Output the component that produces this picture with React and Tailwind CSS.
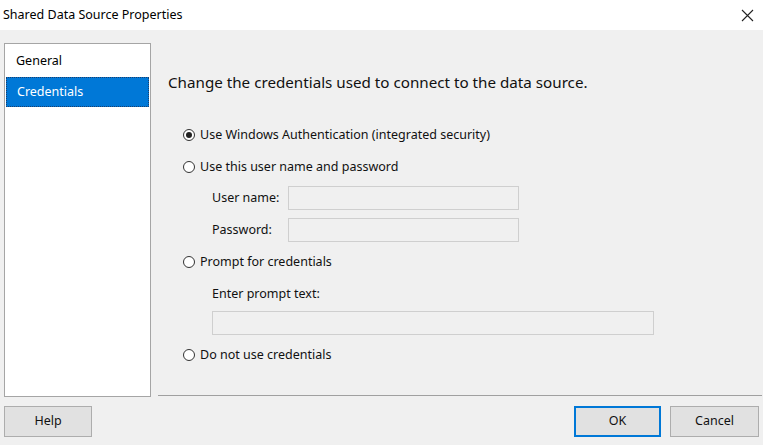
import React from "react";

const font = { fontFamily: '"Noto Sans", "Open Sans", sans-serif' };

function Radio({ checked, label }) {
  return (
    <div className="flex h-[20px] items-center">
      <span className="flex h-[12px] w-[12px] items-center justify-center rounded-full border border-[#333] bg-white">
        {checked && <span className="h-[6px] w-[6px] rounded-full bg-[#222]" />}
      </span>
      <span className="ml-[5px] text-[12.5px] text-[#111]">{label}</span>
    </div>
  );
}

function Field({ className }) {
  return <div className={`h-[24px] border border-[#cfcfcf] bg-[#f0f0f0] ${className}`} />;
}

function Button({ children, primary, className }) {
  return (
    <button
      className={`flex h-[31px] items-center justify-center bg-[#e1e1e1] text-[12.5px] text-[#111] ${
        primary ? "border-2 border-[#0078d7]" : "border border-[#adadad]"
      } ${className}`}
    >
      {children}
    </button>
  );
}

export default function App() {
  return (
    <div className="flex h-[445px] w-[763px] flex-col overflow-hidden bg-[#f0f0f0]" style={font}>
      {/* title bar */}
      <div className="flex h-[30px] items-center justify-between bg-white pl-[3px] pr-[8px]">
        <span className="text-[12.5px] text-black">Shared Data Source Properties</span>
        <svg width="13" height="13" viewBox="0 0 13 13" className="mr-[1px]">
          <path d="M1 1 L12 12 M12 1 L1 12" stroke="#222" strokeWidth="1.1" />
        </svg>
      </div>

      {/* body */}
      <div className="flex pt-[13px] pl-[4px] pr-[1px]">
        <div className="flex h-[354px] w-[147px] flex-col border border-[#a5a5a5] bg-white">
          <div className="flex h-[32px] items-center pl-[11px] pt-[2px] text-[12.5px] text-black">General</div>
          <div className="mx-px mt-px flex h-[30px] items-center border border-dotted border-[#1a3f6e] bg-[#0078d7] pl-[10px] pt-[1px] text-[12.5px] text-white">
            Credentials
          </div>
        </div>

        <div className="ml-[7px] flex h-[353px] flex-1 flex-col border-b border-[#a0a0a0]">
          <div className="pl-[10px] pt-[29px] text-[15.2px] leading-[20px] text-[#111]">
            Change the credentials used to connect to the data source.
          </div>

          <div className="mt-[33px] flex flex-col pl-[25px]">
            <Radio checked label="Use Windows Authentication (integrated security)" />
            <div className="mt-[12px]">
              <Radio label="Use this user name and password" />
            </div>

            <div className="mt-[9px] flex flex-col gap-[8px] pl-[29px]">
              <div className="flex items-center">
                <span className="w-[76px] pt-[1px] text-[12.5px] text-[#111]">User name:</span>
                <Field className="w-[231px]" />
              </div>
              <div className="flex items-center">
                <span className="w-[76px] pt-[1px] text-[12.5px] text-[#111]">Password:</span>
                <Field className="w-[231px]" />
              </div>
            </div>

            <div className="mt-[10px]">
              <Radio label="Prompt for credentials" />
            </div>
            <div className="mt-[12px] pl-[29px] text-[12.5px] leading-[20px] text-[#111]">Enter prompt text:</div>
            <div className="mt-[7px] pl-[29px]">
              <Field className="w-[442px]" />
            </div>
            <div className="mt-[10px]">
              <Radio label="Do not use credentials" />
            </div>
          </div>
        </div>
      </div>

      {/* buttons */}
      <div className="mt-[9px] flex items-center pl-[4px] pr-[4px]">
        <Button className="w-[88px]">Help</Button>
        <div className="flex-1" />
        <Button primary className="w-[87px]">OK</Button>
        <Button className="ml-[9px] w-[89px]">Cancel</Button>
      </div>
    </div>
  );
}
